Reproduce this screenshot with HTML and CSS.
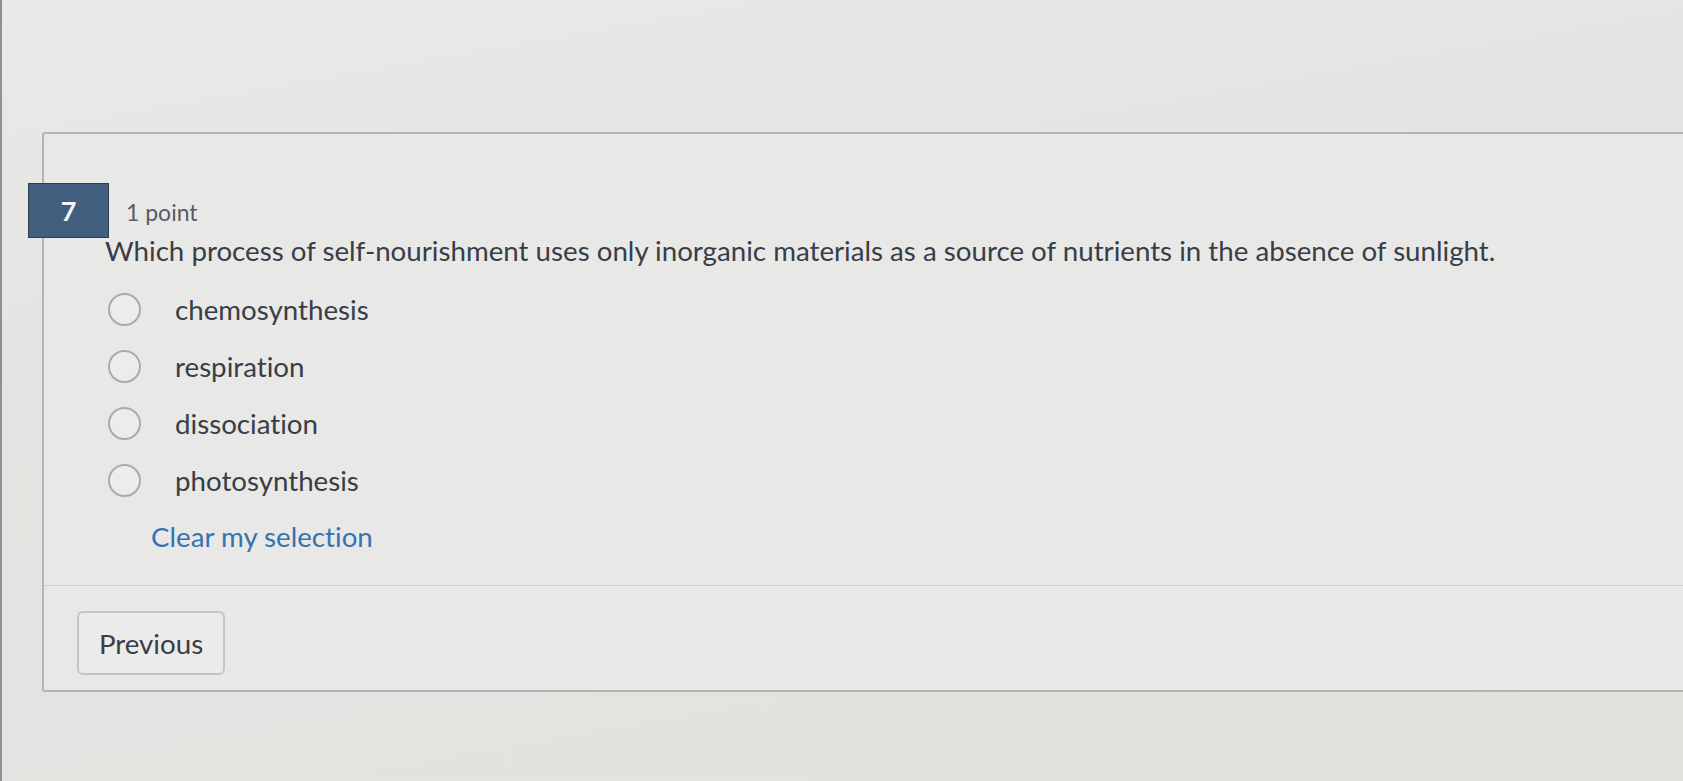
FILE: index.html
```html
<!DOCTYPE html>
<html lang="en">
<head>
<meta charset="utf-8">
<title>Quiz question 7</title>
<link rel="stylesheet" href="styles.css">
</head>
<body>
<div class="screen">
  <div class="card">
    <div class="question-header">
      <div class="qnum">7</div>
      <div class="points">1 point</div>
    </div>
    <div class="question-text">Which process of self-nourishment uses only inorganic materials as a source of nutrients in the absence of sunlight.</div>
    <div class="answers">
      <label class="answer"><span class="radio"></span><span class="answer-text">chemosynthesis</span></label>
      <label class="answer"><span class="radio"></span><span class="answer-text">respiration</span></label>
      <label class="answer"><span class="radio"></span><span class="answer-text">dissociation</span></label>
      <label class="answer"><span class="radio"></span><span class="answer-text">photosynthesis</span></label>
    </div>
    <div class="clear-row"><a class="clear-link" href="#">Clear my selection</a></div>
    <div class="footer">
      <button class="btn" type="button">Previous</button>
    </div>
  </div>
</div>
</body>
</html>
```

FILE: styles.css
```css
html, body {
  margin: 0;
  padding: 0;
}
body {
  width: 1683px;
  height: 781px;
  overflow: hidden;
  background: linear-gradient(170deg, #e9e9e7 0%, #e3e3e1 40%, #e2e2df 100%);
  font-family: "Lato", "Liberation Sans", sans-serif;
  font-variant-ligatures: none;
  font-feature-settings: "liga" 0;
  color: #3b404b;
}
.screen {
  padding-top: 132px;
  padding-left: 40px;
  border-left: 2px solid #8e9092;
  height: 100%;
  box-sizing: border-box;
}
.card {
  background: #e8e8e6;
  border: 2px solid #b3b4b4;
  border-right: none;
  border-radius: 3px 0 0 3px;
  box-sizing: border-box;
  padding-top: 49px;
  padding-bottom: 15px;
}
.question-header {
  display: flex;
  align-items: center;
  gap: 17px;
  margin-left: -16px;
}
.qnum {
  width: 81px;
  height: 55px;
  background: #415e7e;
  border: 1px solid #2f3e4c;
  box-sizing: border-box;
  color: #f4f6f8;
  font-weight: 700;
  font-size: 27px;
  display: flex;
  align-items: center;
  justify-content: center;
}
.points {
  font-size: 23px;
  color: #575c66;
  padding-top: 2px;
}
.question-text {
  margin-top: -4px;
  margin-left: 61px;
  font-size: 27.7px;
  color: #383d48;
  line-height: 34px;
  white-space: nowrap;
}
.answers {
  margin-top: 25px;
  margin-left: 64px;
  display: flex;
  flex-direction: column;
  gap: 24px;
}
.answer {
  display: flex;
  align-items: center;
  gap: 34px;
  height: 33px;
}
.radio {
  width: 33px;
  height: 33px;
  border: 2px solid #a9abad;
  border-radius: 50%;
  box-sizing: border-box;
  background: #ececea;
  flex: none;
}
.answer-text {
  font-size: 27.7px;
  color: #383d48;
}
.clear-row {
  margin-top: 23px;
  margin-left: 107px;
}
.clear-link {
  font-size: 27.7px;
  color: #3672b3;
  text-decoration: none;
}
.footer {
  margin-top: 32px;
  border-top: 1px solid #cfd0cf;
  padding-top: 25px;
  padding-left: 33px;
}
.btn {
  width: 148px;
  height: 64px;
  background: #ebebe9;
  border: 2px solid #c3c4c4;
  border-radius: 6px;
  font-family: "Lato", "Liberation Sans", sans-serif;
  font-size: 27.7px;
  color: #383d48;
  padding: 0;
}
```
